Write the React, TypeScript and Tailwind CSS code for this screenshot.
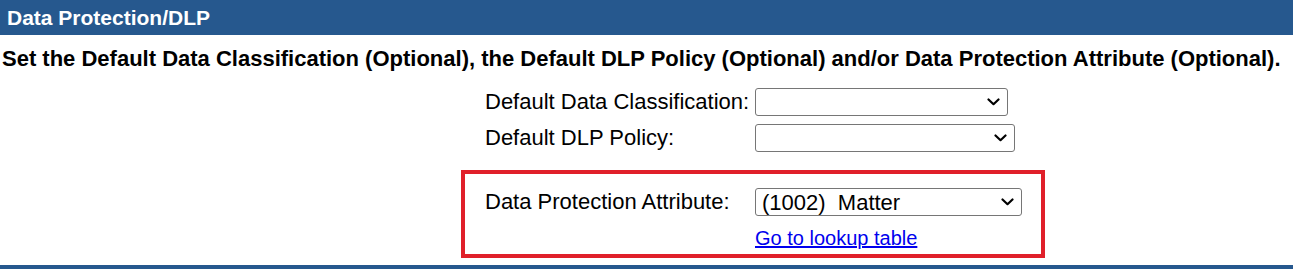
import React from "react";

function Chevron() {
  return (
    <svg width="13" height="8" viewBox="0 0 13 8" className="pointer-events-none absolute right-[8px] top-1/2 -translate-y-1/2">
      <path d="M1.5 1.5 L6.5 6.2 L11.5 1.5" fill="none" stroke="#000" strokeWidth="2.2" strokeLinecap="round" strokeLinejoin="round" />
    </svg>
  );
}

function Select({ width, value }: { width: string; value?: string }) {
  return (
    <div className={`relative h-[28px] ${width}`}>
      <div className="flex h-full items-center whitespace-pre rounded-[3px] border border-[#767676] bg-white px-[6px] text-[22px] text-black">
        {value}
      </div>
      <Chevron />
    </div>
  );
}

function Row({ label, children }: { label: string; children: React.ReactNode }) {
  return (
    <div className="flex items-center">
      <span className="w-[270px] text-[22px] leading-[26px] text-black">{label}</span>
      {children}
    </div>
  );
}

export default function App() {
  return (
    <div className="h-[269px] w-[1293px] overflow-hidden bg-white font-['Liberation_Sans',Arial,sans-serif]">
      <div className="flex h-[35px] items-center bg-[#26588e] px-[7px] text-[21px] font-bold text-white">
        Data Protection/DLP
      </div>
      <p className="mt-[11px] pl-[2px] text-[22px] font-bold leading-[26px] text-black">
        Set the Default Data Classification (Optional), the Default DLP Policy (Optional) and/or Data Protection Attribute (Optional).
      </p>
      <div className="ml-[485px] mt-[16px] flex flex-col gap-[8px]">
        <Row label="Default Data Classification:">
          <Select width="w-[253px]" />
        </Row>
        <Row label="Default DLP Policy:">
          <Select width="w-[260px]" />
        </Row>
      </div>
      <div className="ml-[461px] mt-[18px] h-[88px] w-[584px] border-4 border-[#e0202a] pl-[20px] pt-[14px]">
        <Row label="Data Protection Attribute:">
          <Select width="w-[267px]" value="(1002)  Matter" />
        </Row>
        <a href="#" className="ml-[270px] mt-[10px] block w-fit text-[20px] leading-[24px] text-[#0000ee] underline">
          Go to lookup table
        </a>
      </div>
      <div className="mt-[7px] h-[4px] bg-[#26588e]" />
    </div>
  );
}
